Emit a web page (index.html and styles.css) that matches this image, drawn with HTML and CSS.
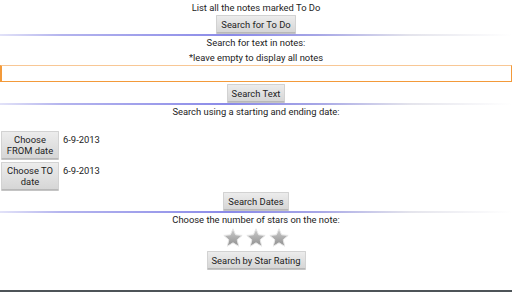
FILE: index.html
```html
<!DOCTYPE html>
<html>
<head lang="en">
    <meta charset="UTF-8">
    <title>Search notes</title>
    <link rel="stylesheet" href="styles.css">
</head>
<body>
    <div class="screen">
        <div class="section">
            <p class="label first">List all the notes marked To Do</p>
            <button class="btn">Search for To Do</button>
        </div>
        <div class="divider"></div>
        <div class="section">
            <p class="label">Search for text in notes:</p>
            <p class="label">*leave empty to display all notes</p>
            <input class="text-input" type="text">
            <button class="btn">Search Text</button>
        </div>
        <div class="divider"></div>
        <div class="section">
            <p class="label">Search using a starting and ending date:</p>
            <div class="date-rows">
                <div class="date-row">
                    <button class="btn btn-date">Choose<br>FROM date</button>
                    <span class="date-value">6-9-2013</span>
                </div>
                <div class="date-row">
                    <button class="btn btn-date">Choose TO<br>date</button>
                    <span class="date-value">6-9-2013</span>
                </div>
            </div>
            <button class="btn">Search Dates</button>
        </div>
        <div class="divider"></div>
        <div class="section">
            <p class="label">Choose the number of stars on the note:</p>
            <div class="stars">
                <svg class="star" viewBox="0 0 20 20"><use href="#star"/></svg>
                <svg class="star" viewBox="0 0 20 20"><use href="#star"/></svg>
                <svg class="star" viewBox="0 0 20 20"><use href="#star"/></svg>
            </div>
            <button class="btn">Search by Star Rating</button>
        </div>
        <div class="bottom-bar"></div>
    </div>

    <svg width="0" height="0" class="defs">
        <defs>
            <linearGradient id="starFill" x1="0" y1="0" x2="0" y2="1">
                <stop offset="0" stop-color="#cfcfcf"/>
                <stop offset="1" stop-color="#8f8f8f"/>
            </linearGradient>
            <symbol id="star" viewBox="0 0 20 20">
                <path d="M10 0.8 L12.59 6.84 L19.13 7.43 L14.18 11.76 L15.64 18.17 L10 14.8 L4.36 18.17 L5.82 11.76 L0.87 7.43 L7.41 6.84 Z"
                      fill="url(#starFill)" stroke="#e6e6e6" stroke-width="1" stroke-linejoin="round"/>
            </symbol>
        </defs>
    </svg>
</body>
</html>
```

FILE: styles.css
```css
*{
    margin: 0;
    padding: 0;
    box-sizing: border-box;
}
body{
    width: 512px;
    height: 292px;
    background: #fff;
    font-family: Roboto, "Liberation Sans", sans-serif;
    font-size: 9.4px;
    color: #222;
    overflow: hidden;
}
.screen{
    height: 292px;
    display: flex;
    flex-direction: column;
}
.section{
    display: flex;
    flex-direction: column;
    align-items: center;
}
.label{
    height: 12px;
    line-height: 12px;
    margin-top: 1px;
    text-align: center;
}
.label + .label{
    margin-top: 3px;
}
.label.first{
    margin-top: 2px;
}
.btn{
    font-family: inherit;
    font-size: 9.4px;
    color: #222;
    height: 18px;
    padding: 0 4px;
    margin-top: 1px;
    border: 1px solid #d2d2d2;
    border-bottom-color: #b8b8b8;
    border-radius: 1px;
    background: linear-gradient(#ececec, #d6d6d6);
    box-shadow: 0 1px 0 #c4c4c4;
}
.divider{
    height: 2px;
    margin-top: 1px;
    background: linear-gradient(to right, #e2e2f8 0%, #b4b4ee 12%, #8a8ae8 45%, #a6a6e6 62%, #e4e4ec 80%, #ffffff 100%);
}
.text-input{
    align-self: stretch;
    height: 17px;
    margin-top: 1px;
    border: 1px solid #f39a3a;
    border-top-color: #f8c795;
    border-left-width: 2px;
    outline: none;
}
.section .text-input + .btn{
    margin-top: 2px;
}
.date-rows{
    align-self: stretch;
    margin-top: 13px;
    display: flex;
    flex-direction: column;
    gap: 3px;
}
.date-row{
    display: flex;
    align-items: flex-start;
    gap: 4px;
    padding-left: 1px;
}
.btn-date{
    width: 58px;
    height: 28px;
    padding: 0;
    margin-top: 0;
    line-height: 11px;
}
.date-value{
    line-height: 18px;
}
.date-rows + .btn{
    margin-top: 2px;
}
.stars{
    display: flex;
    gap: 3px;
    margin-top: 2px;
}
.star{
    width: 20px;
    height: 20px;
    display: block;
}
.stars + .btn{
    margin-top: 3px;
}
.bottom-bar{
    margin-top: auto;
    height: 2px;
    background: #4e5458;
}
.defs{
    position: absolute;
}
```
